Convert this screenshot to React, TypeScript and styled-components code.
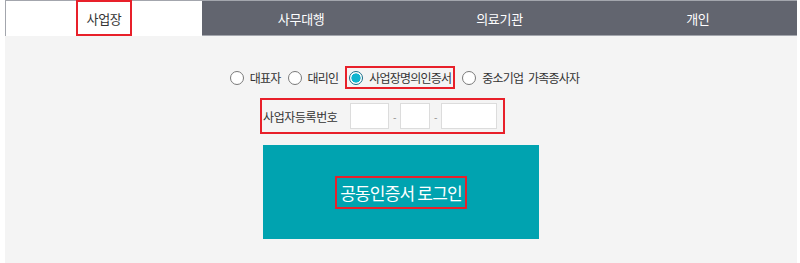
import React, { useState } from 'react'
import styled, { createGlobalStyle } from 'styled-components'

const COLORS = {
  WHITE: '#ffffff',
  PANEL: '#f4f4f4',
  TAB_DARK: '#62656f',
  TAB_LINE: '#a3a6ad',
  TEXT: '#333333',
  TEAL: '#00a3b0',
  RED: '#e8202a',
  INPUT_BORDER: '#dcdcdc',
}

const FONT = `'Noto Sans CJK KR', 'Noto Sans', sans-serif`

const TABS = ['사업장', '사무대행', '의료기관', '개인']
const TYPES = ['대표자', '대리인', '사업장명의인증서', '중소기업 가족종사자']

const GlobalStyle = createGlobalStyle`
  html, body {
    margin: 0;
    padding: 0;
    background: ${COLORS.WHITE};
    font-family: ${FONT};
  }
  * { box-sizing: border-box; }
`

const App = () => {
  const [tab, setTab] = useState(0)
  const [type, setType] = useState(2)

  return (
    <>
      <GlobalStyle />
      <Frame>
        <TabBar>
          {TABS.map((label, i) => (
            <Tab key={label} active={i === tab} onClick={() => setTab(i)}>
              {i === 0 ? <TabMark>{label}</TabMark> : label}
            </Tab>
          ))}
        </TabBar>
        <Panel>
          <RadioRow>
            {TYPES.map((label, i) => {
              const item = (
                <RadioItem key={label} onClick={() => setType(i)}>
                  <RadioCircle checked={i === type} />
                  {label}
                </RadioItem>
              )
              return i === 2 ? (
                <Highlight key={label} pad="0 2px">
                  {item}
                </Highlight>
              ) : (
                item
              )
            })}
          </RadioRow>
          <FormArea>
            <Highlight pad="3px 6px 3px 1px">
              <RegRow>
                <RegLabel>사업자등록번호</RegLabel>
                <RegInput w={39} maxLength={3} />
                <Dash>-</Dash>
                <RegInput w={30} maxLength={2} />
                <Dash>-</Dash>
                <RegInput w={56} maxLength={5} />
              </RegRow>
            </Highlight>
            <LoginButton>
              <ButtonMark>공동인증서 로그인</ButtonMark>
            </LoginButton>
          </FormArea>
        </Panel>
      </Frame>
    </>
  )
}

export default App

const Frame = styled.div`
  display: flex;
  flex-direction: column;
  width: 792px;
  height: 263px;
  margin-left: 5px;
`

const TabBar = styled.div`
  display: grid;
  grid-template-columns: 197px 1fr 1fr 1fr;
  height: 36px;
  border-top: 1px solid ${COLORS.TAB_LINE};
`

const Tab = styled.button<{ active: boolean }>`
  display: flex;
  align-items: center;
  justify-content: center;
  padding: 0;
  border: none;
  border-left: ${({ active }) =>
    active ? `1px solid ${COLORS.TAB_LINE}` : 'none'};
  border-bottom: ${({ active }) =>
    active ? 'none' : `1px solid ${COLORS.TAB_LINE}`};
  background: ${({ active }) => (active ? COLORS.WHITE : COLORS.TAB_DARK)};
  color: ${({ active }) => (active ? COLORS.TEXT : COLORS.WHITE)};
  font-family: ${FONT};
  font-size: 13px;
  letter-spacing: -0.3px;
  cursor: pointer;
`

const TabMark = styled.span`
  display: flex;
  align-items: center;
  height: 36px;
  margin-top: -1px;
  padding: 0 9px;
  border: 2px solid ${COLORS.RED};
`

const Panel = styled.div`
  flex: 1;
  display: flex;
  flex-direction: column;
  align-items: center;
  padding-top: 30px;
  background: ${COLORS.PANEL};
`

const RadioRow = styled.div`
  display: flex;
  align-items: center;
  gap: 7px;
  height: 23px;
  margin-left: 7px;
  font-size: 12px;
  letter-spacing: -0.8px;
  word-spacing: 3px;
  color: ${COLORS.TEXT};
`

const Highlight = styled.div<{ pad: string }>`
  display: flex;
  align-items: center;
  padding: ${({ pad }) => pad};
  border: 2px solid ${COLORS.RED};
`

const RadioItem = styled.label`
  display: flex;
  align-items: center;
  gap: 6px;
  height: 19px;
  white-space: pre;
  cursor: pointer;
`

const RadioCircle = styled.span<{ checked: boolean }>`
  flex-shrink: 0;
  width: 14px;
  height: 14px;
  border-radius: 50%;
  border: 1px solid ${({ checked }) => (checked ? '#1b6f8a' : '#7a7a7a')};
  background: ${({ checked }) =>
    checked
      ? `radial-gradient(circle, #10b4cf 0 4.3px, #ffffff 4.9px)`
      : COLORS.WHITE};
`

const FormArea = styled.div`
  display: flex;
  flex-direction: column;
  align-items: flex-start;
  width: 276px;
  margin-top: 9px;
  margin-left: -6px;
`

const RegRow = styled.div`
  display: flex;
  align-items: center;
  gap: 4px;
  font-size: 12px;
  letter-spacing: -0.4px;
  color: ${COLORS.TEXT};
`

const RegLabel = styled.span`
  width: 83px;
`

const RegInput = styled.input<{ w: number }>`
  width: ${({ w }) => w}px;
  height: 26px;
  border: 1px solid ${COLORS.INPUT_BORDER};
  background: ${COLORS.WHITE};
  outline: none;
`

const Dash = styled.span`
  font-size: 10px;
  color: #888;
`

const LoginButton = styled.button`
  display: flex;
  align-items: center;
  justify-content: center;
  width: 276px;
  height: 94px;
  margin-top: 11px;
  margin-left: 3px;
  border: none;
  background: ${COLORS.TEAL};
  color: ${COLORS.WHITE};
  font-family: ${FONT};
  font-size: 17px;
  letter-spacing: -0.8px;
  cursor: pointer;
`

const ButtonMark = styled.span`
  padding: 2px 3px;
  border: 2px solid ${COLORS.RED};
`
